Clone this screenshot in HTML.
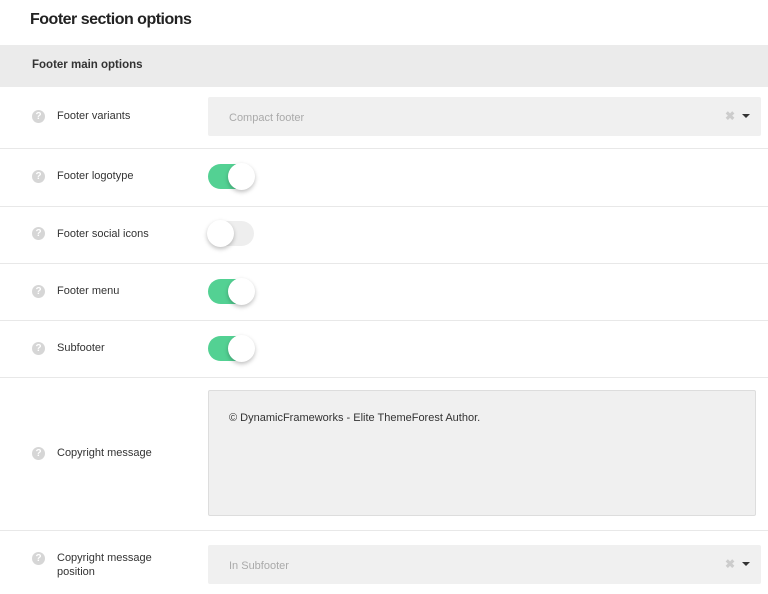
<!DOCTYPE html><html><head><style>
body{margin:0;width:768px;height:594px;background:#fff;font-family:"Liberation Sans",sans-serif;position:relative;overflow:hidden}
.a{position:absolute}
.t{left:30px;top:11px;font-size:16px;font-weight:bold;color:#222;letter-spacing:-0.5px}
.hd{left:0;top:45px;width:768px;height:42px;background:#ebebeb}
.hd span{position:absolute;left:32px;top:14px;font-size:11.5px;font-weight:bold;color:#333}
.sep{left:0;width:768px;height:1px;background:#e8e8e8}
.q{left:32px;width:13px;height:13px;border-radius:50%;background:#d6d6d6;color:#fff;font-size:10px;font-weight:bold;text-align:center;line-height:13px}
.l{left:57px;font-size:11px;color:#333;line-height:14px}
.sel{left:208px;width:553px;height:39px;background:#f0f0f0;border-radius:2px;font-size:11px;color:#aaa}
.sel .v{position:absolute;left:21px;top:15px}
.sel .x{position:absolute;right:26px;top:12px;color:#ccc;font-size:12px;font-weight:bold}
.sel .c{position:absolute;right:11px;top:17px;border:4px solid transparent;border-top:4px solid #333;border-bottom:0}
.tg{left:208px;width:46px;height:25px;border-radius:13px;background:#53d193}
.tg i{position:absolute;top:-1px;width:27px;height:27px;border-radius:50%;background:#fff;box-shadow:0 2px 4px rgba(0,0,0,.25)}
.on i{left:20px}.off{background:#eee}.off i{left:-1px}
.ta{left:208px;top:390px;width:546px;height:124px;background:#f0f0f0;border:1px solid #ddd;border-radius:2px;font-size:11px;color:#333}
</style></head><body>
<div class="a t">Footer section options</div>
<div class="a hd"><span>Footer main options</span></div>
<div class="a q" style="top:110px">?</div><div class="a l" style="top:109px">Footer variants</div>
<div class="a sel" style="top:97px"><span class="v">Compact footer</span><span class="x">✖</span><span class="c"></span></div>
<div class="a sep" style="top:148px"></div>
<div class="a q" style="top:170px">?</div><div class="a l" style="top:169px">Footer logotype</div>
<div class="a tg on" style="top:164px"><i></i></div>
<div class="a sep" style="top:206px"></div>
<div class="a q" style="top:227px">?</div><div class="a l" style="top:227px">Footer social icons</div>
<div class="a tg off" style="top:221px"><i></i></div>
<div class="a sep" style="top:263px"></div>
<div class="a q" style="top:285px">?</div><div class="a l" style="top:284px">Footer menu</div>
<div class="a tg on" style="top:279px"><i></i></div>
<div class="a sep" style="top:320px"></div>
<div class="a q" style="top:342px">?</div><div class="a l" style="top:341px">Subfooter</div>
<div class="a tg on" style="top:336px"><i></i></div>
<div class="a sep" style="top:377px"></div>
<div class="a q" style="top:447px">?</div><div class="a l" style="top:446px">Copyright message</div>
<div class="a ta"><span style="position:absolute;left:20px;top:21px">© DynamicFrameworks - Elite ThemeForest Author.</span></div>
<div class="a sep" style="top:530px"></div>
<div class="a q" style="top:552px">?</div><div class="a l" style="top:551px">Copyright message<br>position</div>
<div class="a sel" style="top:545px"><span class="v">In Subfooter</span><span class="x">✖</span><span class="c"></span></div>
</body></html>
